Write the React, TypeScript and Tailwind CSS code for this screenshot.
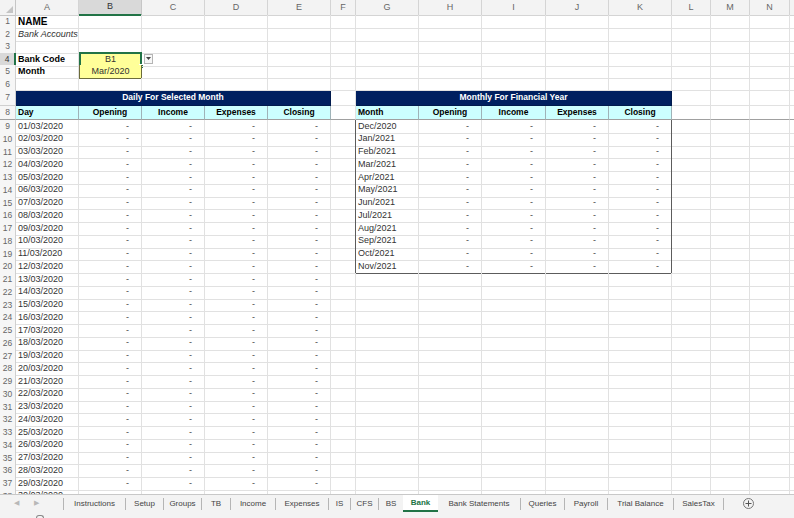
import React from 'react';
import { twMerge } from 'tailwind-merge';

const GRID =
  'grid grid-cols-[16px_63px_63px_63px_63px_63px_25px_63px_63px_64px_63px_63px_39px_39px_40px_1fr]';

const days = Array.from({ length: 30 }, (_, i) => `${String(i + 1).padStart(2, '0')}/03/2020`);
const months = [
  'Dec/2020',
  'Jan/2021',
  'Feb/2021',
  'Mar/2021',
  'Apr/2021',
  'May/2021',
  'Jun/2021',
  'Jul/2021',
  'Aug/2021',
  'Sep/2021',
  'Oct/2021',
  'Nov/2021',
];
const letters = ['A', 'B', 'C', 'D', 'E', 'F', 'G', 'H', 'I', 'J', 'K', 'L', 'M', 'N'];

const tabs: { name: string; w: string; sep: boolean }[] = [
  { name: 'Instructions', w: 'w-[61px]', sep: true },
  { name: 'Setup', w: 'w-[37px]', sep: true },
  { name: 'Groups', w: 'w-[37px]', sep: true },
  { name: 'TB', w: 'w-[28px]', sep: true },
  { name: 'Income', w: 'w-[44px]', sep: true },
  { name: 'Expenses', w: 'w-[52px]', sep: true },
  { name: 'IS', w: 'w-[21px]', sep: true },
  { name: 'CFS', w: 'w-[27px]', sep: true },
  { name: 'BS', w: 'w-[24px]', sep: false },
];
const tabsAfter: { name: string; w: string }[] = [
  { name: 'Bank Statements', w: 'w-[82px]' },
  { name: 'Queries', w: 'w-[43px]' },
  { name: 'Payroll', w: 'w-[42px]' },
  { name: 'Trial Balance', w: 'w-[65px]' },
  { name: 'SalesTax', w: 'w-[49px]' },
];

const Cell: React.FC<{ className?: string; children?: React.ReactNode }> = ({ className, children }) => (
  <div
    className={twMerge(
      'relative flex items-center overflow-hidden whitespace-nowrap border-r border-b border-[#e1e1e1] px-[2px] text-[9px] text-[#262626]',
      className
    )}
  >
    {children}
  </div>
);

const RowNum: React.FC<{ n: number; className?: string }> = ({ n, className }) => (
  <div
    className={twMerge(
      'flex items-center justify-center border-r border-b border-[#d0d0d0] bg-[#f6f6f6] text-[8.5px] text-[#666]',
      className
    )}
  >
    {n}
  </div>
);

const Dash: React.FC<{ className?: string }> = ({ className }) => (
  <Cell className={twMerge('justify-end pr-[12px] text-[#444]', className)}>-</Cell>
);

const BORDER_DARK = 'border-r-[#5c5c5c]';

const App: React.FC = () => {
  return (
    <div className="flex h-[518px] w-[794px] flex-col overflow-hidden bg-white font-['Liberation_Sans',Arial,sans-serif]">
      {/* sheet */}
      <div className="h-[495px] overflow-hidden">
        {/* column letters */}
        <div className={`${GRID} h-[15px]`}>
          <div className="relative border-r border-b border-[#c6c6c6] bg-[#f3f3f3]">
            <svg className="absolute right-[2px] bottom-[2px]" width="7" height="7" viewBox="0 0 7 7">
              <path d="M7 0 L7 7 L0 7 Z" fill="#c4c4c4" />
            </svg>
          </div>
          {letters.map((l) => (
            <div
              key={l}
              className={
                l === 'B'
                  ? 'flex items-center justify-center border-r border-b-2 border-r-[#c6c6c6] border-b-[#217346] bg-[#d9d9d9] text-[9px] text-[#333]'
                  : 'flex items-center justify-center border-r border-b border-[#d4d4d4] bg-[#f3f3f3] text-[9px] text-[#666]'
              }
            >
              {l}
            </div>
          ))}
          <div className="border-b border-[#d4d4d4] bg-[#f3f3f3]" />
        </div>

        {/* row 1 */}
        <div className={`${GRID} h-[12.5px]`}>
          <RowNum n={1} />
          <Cell className="text-[10px] font-bold text-black">NAME</Cell>
          {Array.from({ length: 14 }, (_, k) => (
            <Cell key={k} />
          ))}
        </div>
        {/* row 2 */}
        <div className={`${GRID} h-[12.5px]`}>
          <RowNum n={2} />
          <Cell className="overflow-visible italic text-[#333]">Bank Accounts</Cell>
          {Array.from({ length: 14 }, (_, k) => (
            <Cell key={k} />
          ))}
        </div>
        {/* row 3 */}
        <div className={`${GRID} h-[12.5px]`}>
          <RowNum n={3} />
          {Array.from({ length: 15 }, (_, k) => (
            <Cell key={k} />
          ))}
        </div>
        {/* row 4 */}
        <div className={`${GRID} h-[12.5px]`}>
          <RowNum n={4} className="border-r-2 border-r-[#217346] bg-[#d9d9d9] text-[#333]" />
          <Cell className="font-bold text-black">Bank Code</Cell>
          <Cell className="justify-center overflow-visible border-[#6b6b3a] border-l bg-[#ffff99] text-[#333]">
            B1
            <div className="absolute -inset-[1px] border-2 border-[#217346]" />
            <div className="absolute -right-[3px] -bottom-[3px] h-[5px] w-[5px] border border-white bg-[#217346]" />
          </Cell>
          <Cell className="overflow-visible">
            <div className="absolute top-[1px] left-[2px] flex h-[10px] w-[9px] items-center justify-center border border-[#b5b5b5] bg-[#f7f7f7]">
              <svg width="5" height="3" viewBox="0 0 5 3">
                <path d="M0 0 L5 0 L2.5 3 Z" fill="#444" />
              </svg>
            </div>
          </Cell>
          {Array.from({ length: 12 }, (_, k) => (
            <Cell key={k} />
          ))}
        </div>
        {/* row 5 */}
        <div className={`${GRID} h-[12.5px]`}>
          <RowNum n={5} />
          <Cell className="font-bold text-black">Month</Cell>
          <Cell className="justify-center border-l border-[#6b6b3a] bg-[#ffff99] text-[#333]">Mar/2020</Cell>
          {Array.from({ length: 13 }, (_, k) => (
            <Cell key={k} />
          ))}
        </div>
        {/* row 6 */}
        <div className={`${GRID} h-[12.5px]`}>
          <RowNum n={6} />
          {Array.from({ length: 15 }, (_, k) => (
            <Cell key={k} />
          ))}
        </div>
        {/* row 7: titles */}
        <div className={`${GRID} h-[16px]`}>
          <RowNum n={7} />
          <div className="col-span-5 flex items-center justify-center border-r border-b border-[#001a4d] bg-[#002060] text-[8.5px] font-bold text-white">
            Daily For Selected Month
          </div>
          <Cell />
          <div className="col-span-5 flex items-center justify-center border-r border-b border-[#001a4d] bg-[#002060] text-[8.5px] font-bold text-white">
            Monthly For Financial Year
          </div>
          {Array.from({ length: 4 }, (_, k) => (
            <Cell key={k} />
          ))}
        </div>
        {/* row 8: column headings */}
        <div className={`${GRID} h-[14px]`}>
          <RowNum n={8} className="border-b-[#a0a0a0]" />
          <Cell className="border-[#9fb3b8] border-b-[#a0a0a0] bg-[#ccffff] text-[8.5px] font-bold text-black">Day</Cell>
          {['Opening', 'Income', 'Expenses', 'Closing'].map((h) => (
            <Cell
              key={h}
              className="justify-center border-[#9fb3b8] border-b-[#a0a0a0] bg-[#ccffff] text-[8.5px] font-bold text-black"
            >
              {h}
            </Cell>
          ))}
          <Cell className="border-b-[#a0a0a0]" />
          <Cell className="border-[#9fb3b8] border-b-[#a0a0a0] bg-[#ccffff] text-[8.5px] font-bold text-black">Month</Cell>
          {['Opening', 'Income', 'Expenses', 'Closing'].map((h) => (
            <Cell
              key={h}
              className="justify-center border-[#9fb3b8] border-b-[#a0a0a0] bg-[#ccffff] text-[8.5px] font-bold text-black"
            >
              {h}
            </Cell>
          ))}
          {Array.from({ length: 4 }, (_, k) => (
            <Cell key={k} className="border-b-[#a0a0a0]" />
          ))}
        </div>

        {/* data rows */}
        {days.map((d, i) => {
          const inMonthly = i < 12;
          const last = i === 11 ? 'border-b-[#5c5c5c]' : '';
          return (
            <div key={d} className={`${GRID} h-[12.75px]`}>
              <RowNum n={9 + i} />
              <Cell className="text-[#333]">{d}</Cell>
              <Dash />
              <Dash />
              <Dash />
              <Dash />
              <Cell className={inMonthly ? BORDER_DARK : ''} />
              <Cell className={twMerge('text-[#333]', last)}>{inMonthly ? months[i] : ''}</Cell>
              {inMonthly ? (
                <>
                  <Dash className={last} />
                  <Dash className={last} />
                  <Dash className={last} />
                  <Dash className={twMerge(BORDER_DARK, last)} />
                </>
              ) : (
                <>
                  <Cell />
                  <Cell />
                  <Cell />
                  <Cell />
                </>
              )}
              <Cell />
              <Cell />
              <Cell />
              <Cell />
            </div>
          );
        })}
      </div>

      {/* sheet tabs */}
      <div className="flex h-[18px] items-center border-t border-[#c8c8c8] bg-[#f3f3f3] text-[8px] text-[#444]">
        <div className="flex w-[63px] items-center gap-[15px] pl-[14px] text-[7px] text-[#b8b8b8]">
          <span>◀</span>
          <span>▶</span>
        </div>
        <div className="h-[12px] w-px bg-[#b5b5b5]" />
        {tabs.map((t) => (
          <React.Fragment key={t.name}>
            <div className={`${t.w} flex h-full items-center justify-center`}>{t.name}</div>
            {t.sep && <div className="h-[12px] w-px bg-[#b5b5b5]" />}
          </React.Fragment>
        ))}
        <div className="flex h-full w-[35px] items-center justify-center border-b-2 border-[#217346] bg-white font-bold text-[#217346]">
          Bank
        </div>
        {tabsAfter.map((t) => (
          <React.Fragment key={t.name}>
            <div className={`${t.w} flex h-full items-center justify-center`}>{t.name}</div>
            <div className="h-[12px] w-px bg-[#b5b5b5]" />
          </React.Fragment>
        ))}
        <div className="ml-[19px] flex h-[11px] w-[11px] items-center justify-center rounded-full border border-[#777]">
          <svg width="7" height="7" viewBox="0 0 7 7">
            <path d="M3.5 0.5 V6.5 M0.5 3.5 H6.5" stroke="#555" strokeWidth="1" />
          </svg>
        </div>
      </div>

      {/* status bar */}
      <div className="flex-1 bg-[#f3f3f3] pl-[36px]">
        <div className="mt-[3px] h-[3px] w-[8px] rounded-t-full border border-b-0 border-[#888]" />
      </div>
    </div>
  );
};

export default App;
